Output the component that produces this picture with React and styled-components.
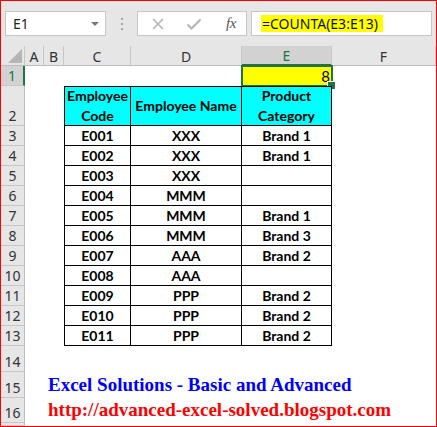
import React from "react";
import styled, { createGlobalStyle } from "styled-components";

const GlobalStyle = createGlobalStyle`
  * {
    margin: 0;
    padding: 0;
    box-sizing: border-box;
  }
  body {
    background: #ffffff;
    font-family: "Noto Sans", "DejaVu Sans", sans-serif;
  }
`;

const GREEN = "#217346";

const Frame = styled.div`
  width: 437px;
  height: 427px;
  border: 1px solid #ff0000;
  overflow: hidden;
  display: flex;
  flex-direction: column;
  background: #ffffff;
`;

const Toolbar = styled.div`
  height: 45px;
  flex: none;
  background: #e6e6e6;
  display: flex;
  align-items: flex-start;
  padding: 10px 4px 0 4px;
`;

const NameBox = styled.div`
  width: 101px;
  height: 25px;
  background: #fff;
  border: 1px solid #c6c6c6;
  display: flex;
  align-items: center;
  justify-content: space-between;
  padding: 0 6px 0 7px;
  font-size: 14px;
  color: #222;
`;

const DropArrow = styled.span`
  width: 0;
  height: 0;
  border-left: 4px solid transparent;
  border-right: 4px solid transparent;
  border-top: 4px solid #777;
`;

const Grip = styled.div`
  width: 31px;
  height: 25px;
  display: flex;
  flex-direction: column;
  align-items: center;
  justify-content: center;
  gap: 3px;

  span {
    width: 2px;
    height: 2px;
    background: #a6a6a6;
  }
`;

const FxButtons = styled.div`
  width: 110px;
  height: 25px;
  background: #fff;
  border: 1px solid #c6c6c6;
  display: flex;
  align-items: center;
  padding-left: 13px;
  gap: 21px;
  color: #b4b4b4;
`;

const FxLabel = styled.span`
  font-family: "Liberation Serif", serif;
  font-style: italic;
  font-size: 15px;
  color: #555;
  margin-left: 3px;
  letter-spacing: -0.5px;
`;

const FormulaBox = styled.div`
  flex: 1;
  height: 25px;
  margin-left: 4px;
  background: #fff;
  border: 1px solid #c6c6c6;
  display: flex;
  align-items: center;
  padding-left: 9px;
`;

const FormulaText = styled.mark`
  background: #ffff00;
  color: #111;
  font-size: 14px;
  line-height: 17px;
  padding: 0 5px 0 1px;
`;

const Sheet = styled.div`
  flex: 1;
  display: grid;
  grid-template-columns: 24px 19px 20px 67px 111px 90px 1fr;
  grid-template-rows: 20px 20px 40px repeat(11, 20px) 26px 26px 25px 1fr;
`;

const Corner = styled.div`
  background: #e6e6e6;
  border-right: 1px solid #c6c6c6;
  border-bottom: 1px solid #bdbdbd;
  display: flex;
  align-items: flex-end;
  justify-content: flex-end;
  padding: 0 2px 2px 0;
`;

const ColHead = styled.div`
  background: ${(p) => (p.$active ? "#d2d2d2" : "#e6e6e6")};
  color: ${(p) => (p.$active ? GREEN : "#333")};
  border-right: 1px solid #c6c6c6;
  border-bottom: ${(p) => (p.$active ? `2px solid ${GREEN}` : "1px solid #bdbdbd")};
  font-size: 14px;
  display: flex;
  align-items: center;
  justify-content: center;
  padding-top: 1px;
`;

const RowHead = styled.div`
  background: ${(p) => (p.$active ? "#d2d2d2" : "#e6e6e6")};
  color: ${(p) => (p.$active ? GREEN : "#333")};
  border-right: ${(p) => (p.$active ? `2px solid ${GREEN}` : "1px solid #bdbdbd")};
  border-bottom: 1px solid #c6c6c6;
  font-size: 14px;
  display: flex;
  align-items: flex-end;
  justify-content: center;
  line-height: 19px;
`;

const Cell = styled.div`
  position: relative;
  background: ${(p) => p.$fill || "transparent"};
  font-family: Lato, "Open Sans", sans-serif;
  font-weight: 700;
  font-size: 14px;
  color: #000;
  line-height: 20px;
  display: flex;
  align-items: center;
  justify-content: ${(p) => p.$align || "center"};
  text-align: center;
  white-space: nowrap;
  border-right: ${(p) => (p.$boxed ? "1px solid #000" : "none")};
  border-bottom: ${(p) => (p.$boxed ? "1px solid #000" : "none")};
  border-left: ${(p) => (p.$first ? "1px solid #000" : "none")};
  border-top: ${(p) => (p.$top ? "1px solid #000" : "none")};
  padding-right: ${(p) => (p.$align === "flex-end" ? "2px" : "0")};
`;

const ValueText = styled.span`
  font-family: Lato, sans-serif;
  font-weight: 400;
  font-size: 15px;
`;

const Selection = styled.div`
  position: absolute;
  left: -1px;
  top: -1px;
  right: -1px;
  bottom: -1px;
  border: 2px solid ${GREEN};
  pointer-events: none;

  &::after {
    content: "";
    position: absolute;
    right: -5px;
    bottom: -5px;
    width: 7px;
    height: 7px;
    background: ${GREEN};
    border: 1px solid #fff;
  }
`;

const Banner = styled.div`
  grid-column: 3 / -1;
  font-family: "Liberation Serif", "Times New Roman", serif;
  font-weight: 700;
  font-size: ${(p) => p.$size}px;
  color: ${(p) => p.$color};
  display: flex;
  align-items: flex-end;
  padding: 0 0 2px 4px;
  white-space: nowrap;
`;

const rows = [
  ["E001", "XXX", "Brand 1"],
  ["E002", "XXX", "Brand 1"],
  ["E003", "XXX", ""],
  ["E004", "MMM", ""],
  ["E005", "MMM", "Brand 1"],
  ["E006", "MMM", "Brand 3"],
  ["E007", "AAA", "Brand 2"],
  ["E008", "AAA", ""],
  ["E009", "PPP", "Brand 2"],
  ["E010", "PPP", "Brand 2"],
  ["E011", "PPP", "Brand 2"],
];

const cols = ["A", "B", "C", "D", "E", "F"];

function Blank() {
  return <Cell />;
}

export default function App() {
  return (
    <>
      <GlobalStyle />
      <Frame>
        <Toolbar>
          <NameBox>
            E1
            <DropArrow />
          </NameBox>
          <Grip>
            <span />
            <span />
            <span />
          </Grip>
          <FxButtons>
            <svg width="14" height="14" viewBox="0 0 14 14">
              <path d="M2 2 L12 12 M12 2 L2 12" stroke="#b4b4b4" strokeWidth="1.6" />
            </svg>
            <svg width="16" height="14" viewBox="0 0 16 14">
              <path d="M1.5 7.5 L5.5 11.5 L14.5 2.5" stroke="#b4b4b4" strokeWidth="2" fill="none" />
            </svg>
            <FxLabel>fx</FxLabel>
          </FxButtons>
          <FormulaBox>
            <FormulaText>=COUNTA(E3:E13)</FormulaText>
          </FormulaBox>
        </Toolbar>

        <Sheet>
          <Corner>
            <svg width="14" height="14" viewBox="0 0 14 14">
              <polygon points="14,0 14,14 0,14" fill="#b5b5b5" />
            </svg>
          </Corner>
          {cols.map((c) => (
            <ColHead key={c} $active={c === "E"}>
              {c}
            </ColHead>
          ))}

          <RowHead $active>1</RowHead>
          <Blank />
          <Blank />
          <Blank />
          <Blank />
          <Cell $fill="#ffff00" $align="flex-end">
            <ValueText>8</ValueText>
            <Selection />
          </Cell>
          <Blank />

          <RowHead>2</RowHead>
          <Blank />
          <Blank />
          <Cell $boxed $first $top $fill="#00ffff">
            Employee
            <br />
            Code
          </Cell>
          <Cell $boxed $top $fill="#00ffff">
            Employee Name
          </Cell>
          <Cell $boxed $top $fill="#00ffff">
            Product
            <br />
            Category
          </Cell>
          <Blank />

          {rows.map((r, i) => (
            <React.Fragment key={r[0]}>
              <RowHead>{i + 3}</RowHead>
              <Blank />
              <Blank />
              <Cell $boxed $first>
                {r[0]}
              </Cell>
              <Cell $boxed>{r[1]}</Cell>
              <Cell $boxed>{r[2]}</Cell>
              <Blank />
            </React.Fragment>
          ))}

          <RowHead>14</RowHead>
          <Cell style={{ gridColumn: "2 / -1" }} />

          <RowHead>15</RowHead>
          <Blank />
          <Banner $size={19} $color="#0000ff">
            Excel Solutions - Basic and Advanced
          </Banner>

          <RowHead>16</RowHead>
          <Blank />
          <Banner $size={19} $color="#ff0000">
            http://advanced-excel-solved.blogspot.com
          </Banner>

          <RowHead />
          <Cell style={{ gridColumn: "2 / -1" }} />
        </Sheet>
      </Frame>
    </>
  );
}
